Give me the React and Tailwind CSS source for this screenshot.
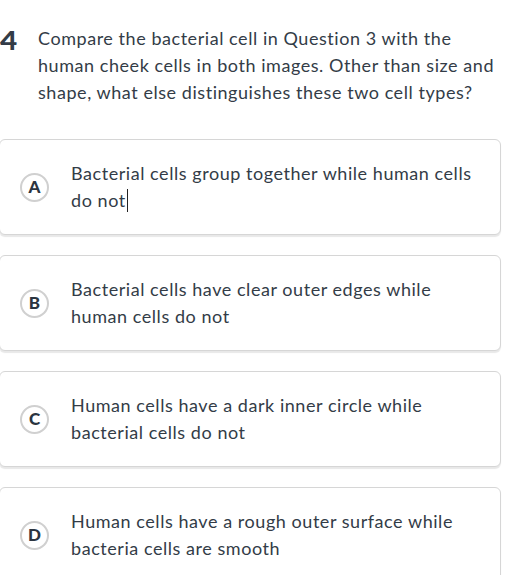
import React from 'react';

const options = [
    { letter: 'A', text: 'Bacterial cells group together while human cells do not', caret: true },
    { letter: 'B', text: 'Bacterial cells have clear outer edges while human cells do not' },
    { letter: 'C', text: 'Human cells have a dark inner circle while bacterial cells do not' },
    { letter: 'D', text: 'Human cells have a rough outer surface while bacteria cells are smooth' },
];

function Option({ letter, text, caret }) {
    return (
        <div className="flex items-center ml-[-1px] w-[502px] h-[96px] bg-white border border-[#d6d6d6] rounded-md shadow-[0_2px_1px_#e8e8e8]">
            <div className="w-[71px] flex justify-center pr-[2px]">
                <span className="w-[29px] h-[29px] rounded-full border-2 border-[#d0d0d0] flex items-center justify-center text-[17px] font-black text-[#2b3440]">
                    {letter}
                </span>
            </div>
            <p className="flex-1 pr-5 text-[18px] tracking-[0.55px] leading-[27px] text-[#333c47]">
                {text}
                {caret && <span className="inline-block align-[-5px] w-px h-[23px] bg-[#222] ml-[1px]" />}
            </p>
        </div>
    );
}

export default function App() {
    return (
        <div className="w-[516px] h-[575px] overflow-hidden bg-white font-['Lato',sans-serif]">
            <div className="flex pt-[25px]">
                <div className="w-[38px] text-[27px] leading-[27px] font-black text-[#333c47] pt-[1px] scale-x-110 origin-left">4</div>
                <p className="w-[470px] text-[18px] tracking-[0.55px] leading-[27px] text-[#333c47]">
                    Compare the bacterial cell in Question 3 with the human cheek cells in both images. Other than size and shape, what else distinguishes these two cell types?
                </p>
            </div>
            <div className="flex flex-col gap-[20px] mt-[33px]">
                {options.map((o) => (
                    <Option key={o.letter} {...o} />
                ))}
            </div>
        </div>
    );
}
